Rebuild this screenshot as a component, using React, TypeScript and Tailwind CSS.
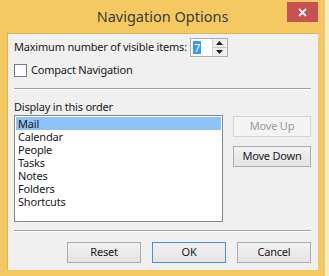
import type { FC } from 'react';

const ITEMS = ['Mail', 'Calendar', 'People', 'Tasks', 'Notes', 'Folders', 'Shortcuts'];

const btn =
	'h-[21px] w-[74px] flex items-center justify-center border bg-gradient-to-b from-[#f2f2f2] to-[#e3e3e3] text-[#1a1a1a]';

const SpinBox: FC = () => (
	<div className="ml-[3px] h-[19px] w-[38px] flex border border-[#abadb3] bg-white">
		<div className="flex-1 flex items-center pl-[2px]">
			<span className="bg-[#3399ff] text-white leading-[13px] px-[1px]">7</span>
		</div>
		<div className="w-[15px] flex flex-col border-l border-[#d0d0d0]">
			<div className="flex-1 flex items-center justify-center bg-[#f0f0f0] border-b border-[#c8c8c8]">
				<svg width="7" height="4" viewBox="0 0 7 4">
					<path d="M0 4 L3.5 0 L7 4 Z" fill="#222" />
				</svg>
			</div>
			<div className="flex-1 flex items-center justify-center bg-[#f0f0f0]">
				<svg width="7" height="4" viewBox="0 0 7 4">
					<path d="M0 0 L3.5 4 L7 0 Z" fill="#222" />
				</svg>
			</div>
		</div>
	</div>
);

export default function App() {
	return (
		<div className="w-[329px] h-[276px] flex bg-[#f5c962] font-['Noto_Sans',sans-serif] text-[11px] tracking-[-0.2px] text-[#1a1a1a]">
			<div className="w-[325px] flex flex-col">
				<div className="h-[33px] grid grid-cols-[1fr_auto_1fr] items-start">
					<div />
					<div className="pt-[6px] text-[14.5px] tracking-normal leading-[20px] text-[#3b3b3b]">Navigation Options</div>
					<div className="flex justify-end pr-[7px] pt-[2px]">
						<div className="w-[31px] h-[20px] bg-[#c75050] flex items-center justify-center">
							<svg width="9" height="9" viewBox="0 0 9 9">
								<path d="M1 1 L8 8 M8 1 L1 8" stroke="#fff" strokeWidth="1.8" />
							</svg>
						</div>
					</div>
				</div>

				<div className="ml-[7px] w-[311px] h-[237px] bg-[#f0f0f0] border-t border-l border-[#d9b562] px-[6px] pt-[4px] flex flex-col">
					<div className="h-[19px] flex items-center">
						<span>Maximum number of visible items:</span>
						<SpinBox />
					</div>
					<div className="mt-[6px] h-[14px] flex items-center gap-[4px]">
						<div className="w-[13px] h-[13px] border border-[#6f7d8f] bg-white" />
						<span>Compact Navigation</span>
					</div>
					<div className="mt-[11px] w-[297px] border-t border-[#a0a0a0] border-b border-b-white" />

					<div className="mt-[9px] leading-[15px]">Display in this order</div>

					<div className="mt-[1px] flex">
						<div className="w-[209px] h-[107px] border border-[#828790] bg-white p-[1px]">
							{ITEMS.map((item, i) => (
								<div
									key={item}
									className={
										i === 0
											? 'h-[13px] leading-[13px] pl-[2px] bg-[#8fc3f7]'
											: 'h-[13px] leading-[13px] pl-[2px]'
									}
								>
									{item}
								</div>
							))}
						</div>
						<div className="ml-[10px] pt-[1px] flex flex-col gap-[9px]">
							<div className="h-[21px] w-[78px] flex items-center justify-center border border-[#d5d5d5] bg-[#f4f4f4] text-[#9a9a9a]">
								Move Up
							</div>
							<div className={`${btn} w-[78px] border-[#acacac]`}>Move Down</div>
						</div>
					</div>

					<div className="mt-[8px] w-[297px] border-t border-[#a0a0a0] border-b border-b-white" />

					<div className="mt-[10px] w-[297px] flex justify-end gap-[11px]">
						<div className={`${btn} border-[#acacac]`}>Reset</div>
						<div className={`${btn} border-[#4a8fd4] from-[#eaf3fb] to-[#dcecfc]`}>OK</div>
						<div className={`${btn} border-[#acacac]`}>Cancel</div>
					</div>
				</div>
			</div>
			<div className="w-[4px] bg-[#f8ecc9]" />
		</div>
	);
}
